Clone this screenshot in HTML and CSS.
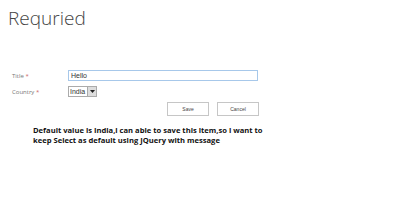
FILE: index.html
```html
<!DOCTYPE html>
<html lang="en">
  <head>
    <meta charset="UTF-8" />
    <title>Requried</title>
    <link rel="stylesheet" href="styles.css">
  </head>
  <body>
    <h1 class="page-title">Requried</h1>
    <form class="item-form">
      <div class="form-row">
        <label class="form-label">Title <span class="req">*</span></label>
        <input type="text" class="text-field" value="Hello" />
      </div>
      <div class="form-row">
        <label class="form-label">Country <span class="req">*</span></label>
        <div class="select-box">
          <span class="select-value">India</span>
          <span class="select-arrow">
            <svg width="5" height="3" viewBox="0 0 5 3"><path d="M0 0h5L2.5 3z" fill="#222"/></svg>
          </span>
        </div>
      </div>
      <div class="form-actions">
        <button type="button" class="btn">Save</button>
        <button type="button" class="btn">Cancel</button>
      </div>
    </form>
    <p class="note">Default value is India,i can able to save this item,so i want to<br>keep Select as default using JQuery with message</p>
  </body>
</html>
```

FILE: styles.css
```css
body {
  margin: 0;
  padding: 0;
  background: #fff;
  font-family: "Open Sans", sans-serif;
  color: #444;
}
.page-title {
  margin: 0;
  padding: 5px 0 0 8px;
  font-size: 19px;
  font-weight: 300;
  line-height: 26px;
  color: #444;
}
.item-form {
  margin-top: 39px;
  padding-left: 12px;
}
.form-row {
  display: flex;
  align-items: center;
  margin-bottom: 5px;
}
.form-label {
  width: 56px;
  font-size: 6px;
  color: #777;
}
.req {
  color: #c66;
}
.text-field {
  box-sizing: border-box;
  width: 190px;
  height: 11px;
  padding: 0 2px;
  border: 1px solid #a7c8ea;
  font-family: "Liberation Sans", sans-serif;
  font-size: 7px;
  color: #333;
}
.select-box {
  display: flex;
  align-items: center;
  box-sizing: border-box;
  height: 11px;
  border: 1px solid #ababab;
  font-family: "Liberation Sans", sans-serif;
  font-size: 7px;
  color: #333;
}
.select-value {
  padding: 0 2px 0 1px;
}
.select-arrow {
  display: flex;
  align-items: center;
  justify-content: center;
  width: 8px;
  height: 9px;
  background: #ddd;
  border-left: 1px solid #aaa;
}
.form-actions {
  display: flex;
  gap: 8px;
  margin-left: 155px;
  margin-top: 1px;
}
.btn {
  box-sizing: border-box;
  width: 42px;
  height: 14px;
  padding: 0;
  background: #fff;
  border: 1px solid #c6c6c6;
  font-family: "Liberation Sans", sans-serif;
  font-size: 5px;
  color: #444;
}
.note {
  margin: 9px 0 0 33px;
  font-family: "Open Sans", sans-serif;
  font-weight: 700;
  font-size: 7.6px;
  line-height: 10px;
  color: #111;
}
```
